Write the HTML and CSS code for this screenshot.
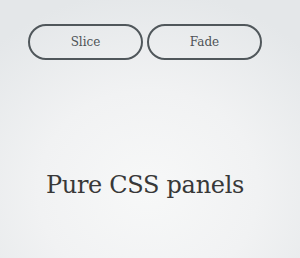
FILE: index.html
```html
<!DOCTYPE html>
<html>
<head>
<meta charset="utf-8">
<link rel="stylesheet" href="styles.css">
</head>
<body>
<div class="page">
  <nav class="tabs">
    <button class="tab">Slice</button>
    <button class="tab">Fade</button>
  </nav>
  <h1 class="title">Pure CSS panels</h1>
</div>
</body>
</html>
```
FILE: styles.css
```css
html, body {
  margin: 0;
  padding: 0;
  height: 100%;
}
body {
  background: radial-gradient(ellipse 220px 200px at 148px 190px, #f7f8f8 0%, #f1f2f3 50%, #e4e7e9 100%);
  background-color: #e4e7e9;
  font-family: "DejaVu Serif", "Liberation Serif", serif;
  overflow: hidden;
}
.page {
  width: 290px;
  display: flex;
  flex-direction: column;
  align-items: center;
}
.tabs {
  display: flex;
  gap: 4px;
  padding-top: 24px;
}
.tab {
  box-sizing: border-box;
  width: 115px;
  height: 36px;
  border: 2px solid #50575b;
  border-radius: 18px;
  background: transparent;
  color: #4d5256;
  font-family: "DejaVu Serif", serif;
  font-size: 12px;
  padding: 0;
}
.title {
  margin: 111px 0 0;
  font-weight: 300;
  font-size: 24px;
  color: #383838;
  letter-spacing: -0.3px;
}
```
